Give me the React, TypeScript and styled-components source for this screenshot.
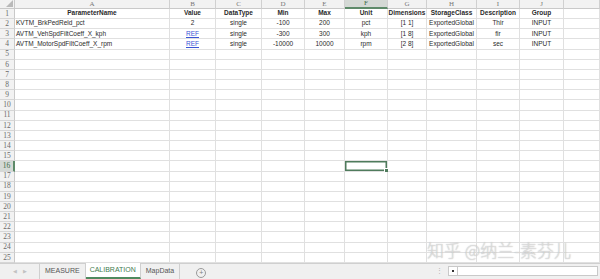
import styled, { createGlobalStyle } from "styled-components";

const GlobalStyle = createGlobalStyle`
  html, body {
    margin: 0;
    padding: 0;
    background: #ffffff;
  }
`;

const columns = [
  { letter: "", width: 15 },
  { letter: "A", width: 155 },
  { letter: "B", width: 46 },
  { letter: "C", width: 46 },
  { letter: "D", width: 43 },
  { letter: "E", width: 40 },
  { letter: "F", width: 43 },
  { letter: "G", width: 39 },
  { letter: "H", width: 50 },
  { letter: "I", width: 43 },
  { letter: "J", width: 44 },
  { letter: "", width: 36 },
];

const data: string[][] = [
  ["ParameterName", "Value", "DataType", "Min", "Max", "Unit", "Dimensions", "StorageClass", "Description", "Group"],
  ["KVTM_BrkPedReld_pct", "2", "single", "-100", "200", "pct", "[1 1]", "ExportedGlobal", "Thir", "INPUT"],
  ["AVTM_VehSpdFiltCoeff_X_kph", "REF", "single", "-300", "300", "kph", "[1 8]", "ExportedGlobal", "fir", "INPUT"],
  ["AVTM_MotorSpdFiltCoeff_X_rpm", "REF", "single", "-10000", "10000", "rpm", "[2 8]", "ExportedGlobal", "sec", "INPUT"],
];

const ROWS = 25;
const ACTIVE_COL = 6; // F
const ACTIVE_ROW = 16;

const Page = styled.div`
  position: relative;
  width: 600px;
  height: 279px;
  overflow: hidden;
  display: flex;
  flex-direction: column;
  font-family: "Liberation Sans", Arial, sans-serif;
`;

const Sheet = styled.div`
  display: grid;
  grid-template-columns: ${columns.map((c) => `${c.width}px`).join(" ")};
  grid-template-rows: 9px repeat(${ROWS}, 10.16px);
  flex: none;
`;

const Corner = styled.div`
  position: relative;
  background: #f2f2f2;
  border-right: 1px solid #c9c9c9;
  border-bottom: 1px solid #c9c9c9;
  box-sizing: border-box;

  svg {
    position: absolute;
    right: 1px;
    bottom: 1px;
  }
`;

const ColHeader = styled.div<{ $active?: boolean }>`
  box-sizing: border-box;
  display: flex;
  align-items: center;
  justify-content: center;
  background: ${(p) => (p.$active ? "#d4d9d5" : "#f2f2f2")};
  border-right: 1px solid #d0d0d0;
  border-bottom: ${(p) => (p.$active ? "2px solid #5d8a69" : "1px solid #c9c9c9")};
  color: ${(p) => (p.$active ? "#3d6b4a" : "#777777")};
  font-family: "Liberation Serif", "Times New Roman", serif;
  font-size: 7px;
  line-height: 1;
`;

const RowHeader = styled.div<{ $active?: boolean }>`
  box-sizing: border-box;
  display: flex;
  align-items: center;
  justify-content: center;
  background: ${(p) => (p.$active ? "#d4d9d5" : "#f2f2f2")};
  border-right: ${(p) => (p.$active ? "2px solid #5d8a69" : "1px solid #c9c9c9")};
  border-bottom: 1px solid #d6d6d6;
  color: ${(p) => (p.$active ? "#3d6b4a" : "#6a6a6a")};
  font-family: "Liberation Serif", "Times New Roman", serif;
  font-size: 7.5px;
  line-height: 1;
`;

const Cell = styled.div<{ $align?: "left" | "center"; $bold?: boolean; $selected?: boolean }>`
  position: relative;
  box-sizing: border-box;
  display: flex;
  align-items: center;
  justify-content: ${(p) => (p.$align === "left" ? "flex-start" : "center")};
  padding: 0 1px;
  border-right: 1px solid #e0e0e0;
  border-bottom: 1px solid #e0e0e0;
  box-shadow: ${(p) => (p.$selected ? "inset 0 0 0 1.5px #4f7b5c" : "none")};
  color: #2a2a2a;
  font-size: 6.5px;
  font-weight: ${(p) => (p.$bold ? 700 : 400)};
  white-space: nowrap;
  overflow: visible;
  line-height: 1;
`;

const FillHandle = styled.span`
  position: absolute;
  right: -2px;
  bottom: -2px;
  width: 3px;
  height: 3px;
  background: #4f7b5c;
  border: 1px solid #ffffff;
`;

const Link = styled.span`
  color: #3a55d6;
  text-decoration: underline;
`;

const TabBar = styled.div`
  flex: 1;
  display: flex;
  align-items: stretch;
  background: #f0f0f0;
  border-top: 1px solid #cfcfcf;
  font-size: 7px;
  color: #555555;
`;

const NavArrows = styled.div`
  width: 39px;
  display: flex;
  align-items: center;
  justify-content: center;
  gap: 6px;
  color: #c2c2c2;
  font-size: 5px;
  border-right: 1px solid #cfcfcf;
`;

const Tab = styled.div<{ $active?: boolean }>`
  display: flex;
  align-items: center;
  padding: 0 ${(p) => (p.$active ? 4 : 5)}px 1px;
  margin-top: -1px;
  background: ${(p) => (p.$active ? "#ffffff" : "transparent")};
  color: ${(p) => (p.$active ? "#3f7c4f" : "#555555")};
  border-bottom: ${(p) => (p.$active ? "2px solid #4f8a5e" : "none")};
  border-right: 1px solid #cfcfcf;
`;

const AddButton = styled.div`
  width: 8px;
  height: 8px;
  margin: 4px 0 0 16px;
  border: 1px solid #9a9a9a;
  border-radius: 50%;
  display: flex;
  align-items: center;
  justify-content: center;
  color: #808080;
  font-size: 7px;
  line-height: 1;
`;

const Spacer = styled.div`
  flex: 1;
`;

const ScrollArea = styled.div`
  width: 162px;
  display: flex;
  align-items: center;
  gap: 5px;
  padding-right: 2px;
`;

const Grip = styled.span`
  color: #b0b0b0;
  font-size: 7px;
`;

const ScrollTrack = styled.div`
  flex: 1;
  height: 8px;
  display: flex;
  border: 1px solid #c9c9c9;
  background: #ffffff;
`;

const ScrollThumb = styled.div`
  width: 8px;
  border-right: 1px solid #c9c9c9;
  display: flex;
  align-items: center;
  justify-content: center;

  &::after {
    content: "";
    width: 2px;
    height: 2px;
    background: #333333;
  }
`;

const Watermark = styled.div`
  position: absolute;
  left: 427px;
  top: 241px;
  font-family: "Noto Sans CJK SC", "Noto Sans", sans-serif;
  font-size: 17px;
  font-weight: 300;
  line-height: 1;
  color: rgba(250, 250, 250, 0.6);
  text-shadow: 0 0 1px rgba(140, 140, 140, 0.85);
  white-space: nowrap;
  pointer-events: none;
`;

const App = () => {
  return (
    <Page>
      <GlobalStyle />
      <Sheet>
        <Corner>
          <svg width="7" height="7" viewBox="0 0 7 7">
            <polygon points="7,0 7,7 0,7" fill="#b9b9b9" />
          </svg>
        </Corner>
        {columns.slice(1).map((c, i) => (
          <ColHeader key={`h${i}`} $active={i + 1 === ACTIVE_COL}>
            {c.letter}
          </ColHeader>
        ))}
        {Array.from({ length: ROWS }, (_, r) => {
          const rowNum = r + 1;
          const values = data[r] ?? [];
          return [
            <RowHeader key={`r${rowNum}`} $active={rowNum === ACTIVE_ROW}>
              {rowNum}
            </RowHeader>,
            ...columns.slice(1).map((_, ci) => {
              const text = values[ci] ?? "";
              const selected = rowNum === ACTIVE_ROW && ci + 1 === ACTIVE_COL;
              return (
                <Cell
                  key={`c${rowNum}-${ci}`}
                  $align={ci === 0 && rowNum > 1 ? "left" : "center"}
                  $bold={rowNum === 1}
                  $selected={selected}
                >
                  {text === "REF" ? <Link>{text}</Link> : text}
                  {selected && <FillHandle />}
                </Cell>
              );
            }),
          ];
        })}
      </Sheet>
      <TabBar>
        <NavArrows>
          <span>◀</span>
          <span>▶</span>
        </NavArrows>
        <Tab>MEASURE</Tab>
        <Tab $active>CALIBRATION</Tab>
        <Tab>MapData</Tab>
        <AddButton>+</AddButton>
        <Spacer />
        <ScrollArea>
          <Grip>⋮</Grip>
          <ScrollTrack>
            <ScrollThumb />
          </ScrollTrack>
        </ScrollArea>
      </TabBar>
      <Watermark>知乎 @纳兰-素芬儿</Watermark>
    </Page>
  );
};

export default App;
